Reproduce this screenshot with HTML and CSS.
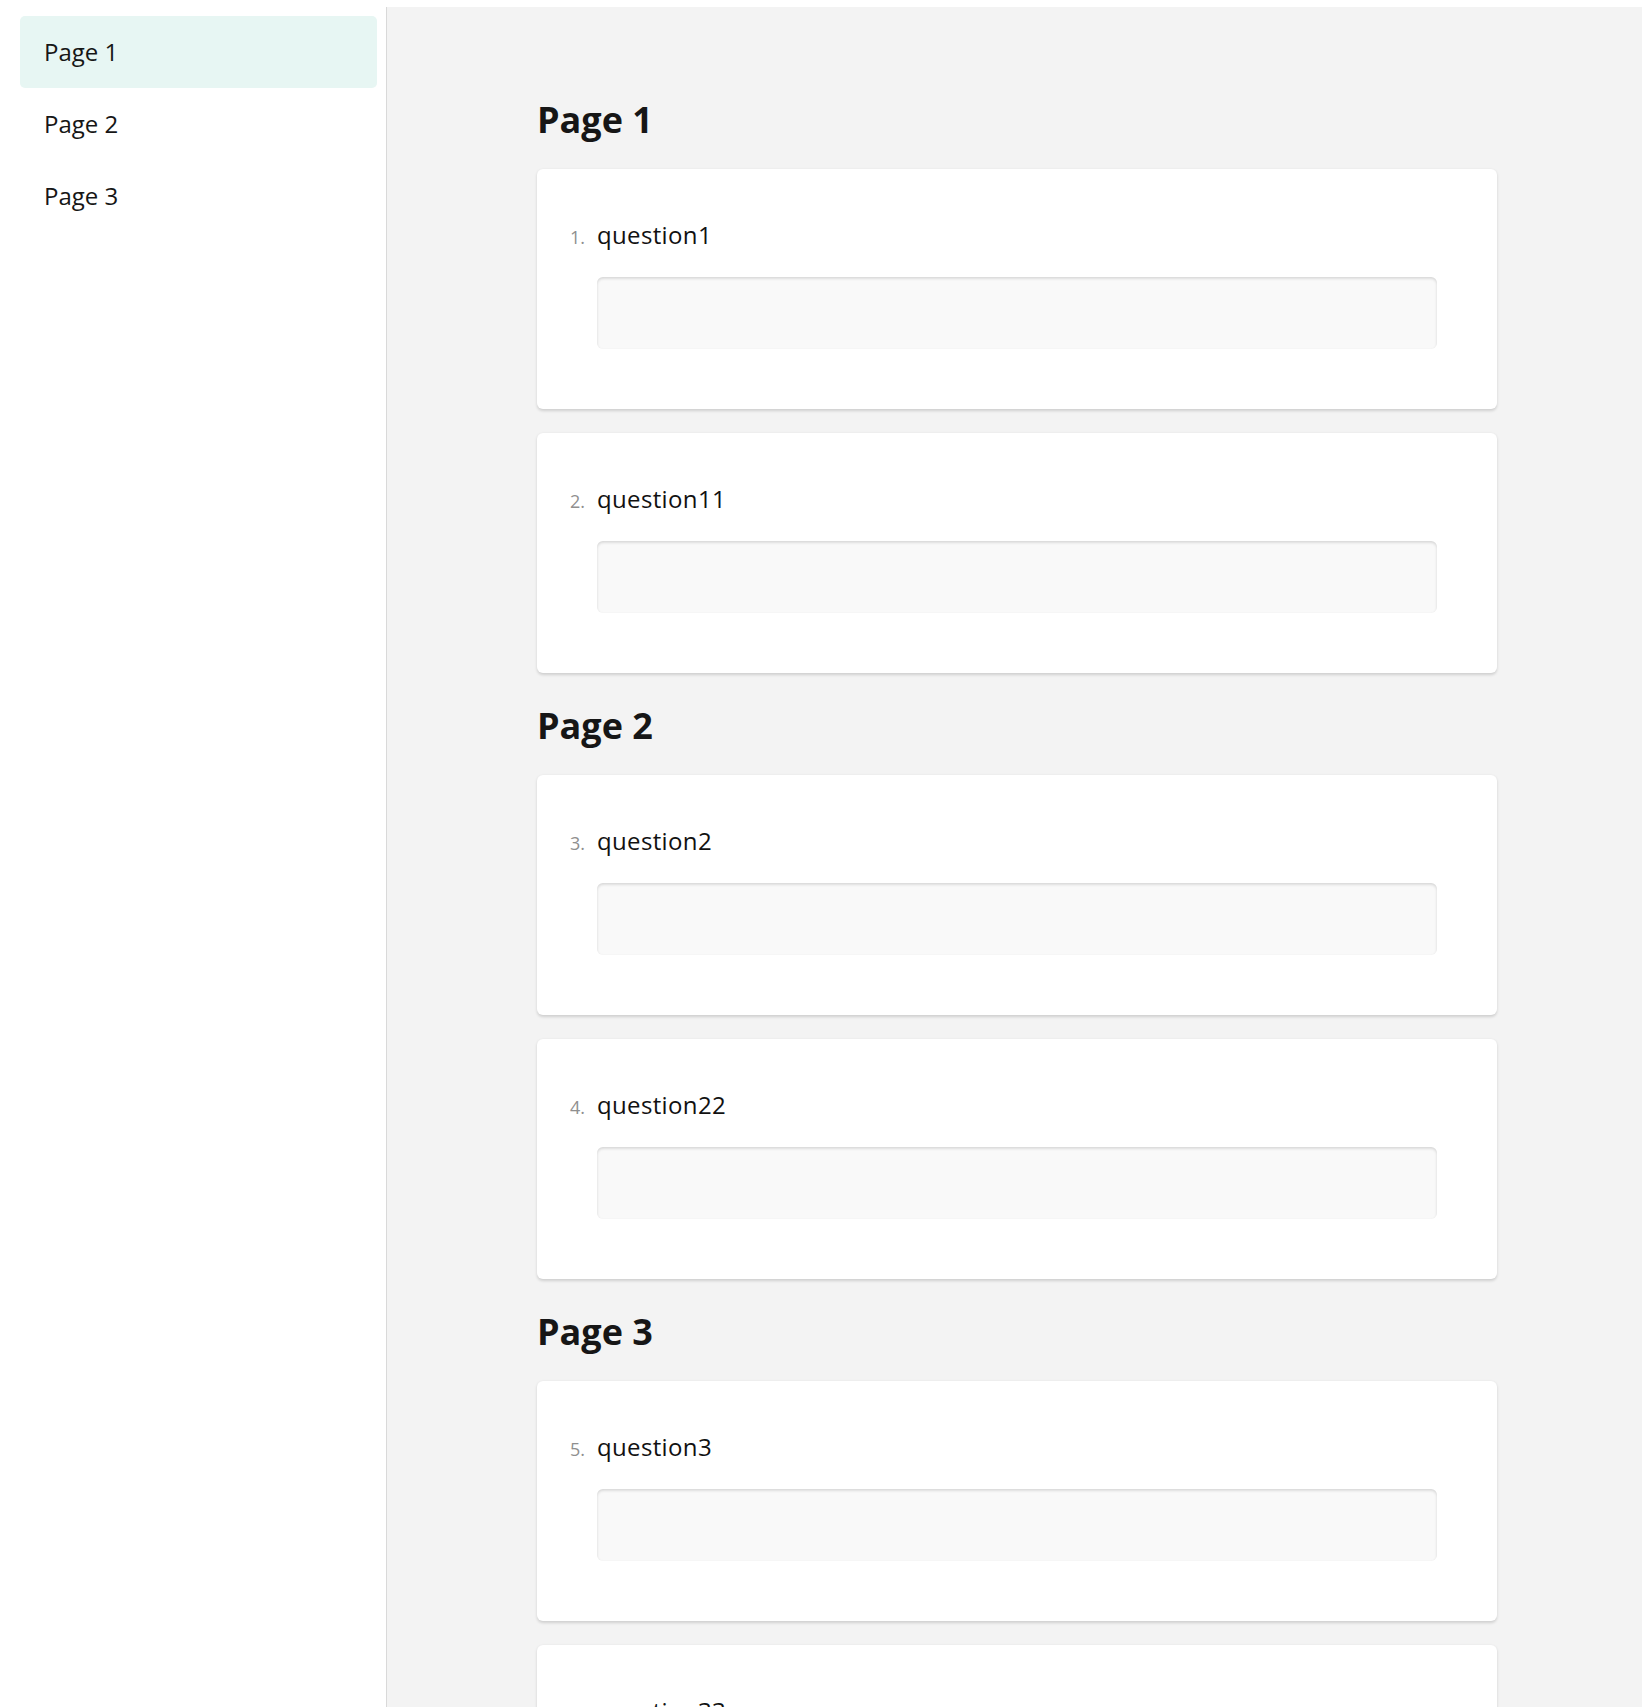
FILE: index.html
```html
<!DOCTYPE html>
<html lang="en">
<head>
<meta charset="utf-8">
<title>Survey</title>
<link rel="stylesheet" href="styles.css">
</head>
<body>
<div class="app">
  <nav class="toc">
    <div class="toc-item active">Page 1</div>
    <div class="toc-item">Page 2</div>
    <div class="toc-item">Page 3</div>
  </nav>
  <main class="main">
    <div class="survey">
      <section class="page">
        <h2 class="page-title">Page 1</h2>
        <div class="card">
          <div class="q-title"><span class="q-num">1.</span><span class="q-text">question1</span></div>
          <div class="q-input"></div>
        </div>
        <div class="card">
          <div class="q-title"><span class="q-num">2.</span><span class="q-text">question11</span></div>
          <div class="q-input"></div>
        </div>
      </section>
      <section class="page">
        <h2 class="page-title">Page 2</h2>
        <div class="card">
          <div class="q-title"><span class="q-num">3.</span><span class="q-text">question2</span></div>
          <div class="q-input"></div>
        </div>
        <div class="card">
          <div class="q-title"><span class="q-num">4.</span><span class="q-text">question22</span></div>
          <div class="q-input"></div>
        </div>
      </section>
      <section class="page">
        <h2 class="page-title">Page 3</h2>
        <div class="card">
          <div class="q-title"><span class="q-num">5.</span><span class="q-text">question3</span></div>
          <div class="q-input"></div>
        </div>
        <div class="card">
          <div class="q-title"><span class="q-num">6.</span><span class="q-text">question33</span></div>
          <div class="q-input"></div>
        </div>
      </section>
    </div>
  </main>
</div>
</body>
</html>
```

FILE: styles.css
```css
html, body {
  margin: 0;
  padding: 0;
  background: #ffffff;
  font-family: "Open Sans", "Noto Sans", sans-serif;
  color: #161616;
}

.app {
  display: flex;
  height: 100vh;
  overflow: hidden;
}

.toc {
  flex: 0 0 387px;
  width: 387px;
  margin-top: 7px;
  padding: 9px 9px 0 20px;
  box-sizing: border-box;
  border-right: 1px solid #d9d9d9;
  background: #ffffff;
  display: flex;
  flex-direction: column;
}

.toc-item {
  height: 72px;
  display: flex;
  align-items: center;
  padding-left: 24px;
  font-size: 24px;
  line-height: 36px;
  border-radius: 5px;
  color: #161616;
}

.toc-item.active {
  background: #e7f6f3;
}

.main {
  flex: 1 1 auto;
  margin-top: 7px;
  background: #f3f3f3;
  padding: 89px 0 0 150px;
  box-sizing: border-box;
}

.survey {
  width: 960px;
  display: flex;
  flex-direction: column;
  gap: 29px;
}

.page {
  display: flex;
  flex-direction: column;
  gap: 24px;
}

.page-title {
  margin: 0 0 1px 0;
  font-size: 36px;
  line-height: 48px;
  font-weight: 700;
  color: #161616;
}

.card {
  background: #ffffff;
  border-radius: 6px;
  box-shadow: 0 1.5px 3px rgba(0, 0, 0, 0.15);
  padding: 48px 60px 60px 60px;
  display: flex;
  flex-direction: column;
  gap: 24px;
}

.q-title {
  display: flex;
  align-items: baseline;
  height: 36px;
  margin-left: -60px;
  font-size: 24px;
  line-height: 36px;
}

.q-num {
  flex: 0 0 60px;
  box-sizing: border-box;
  padding-right: 12px;
  text-align: right;
  font-size: 18px;
  line-height: 24px;
  color: #8f8f8f;
}

.q-text {
  color: #111111;
  font-weight: 400;
  letter-spacing: 0.35px;
}

.q-input {
  height: 72px;
  border-radius: 6px;
  background: #f9f9f9;
  box-shadow: inset 0 1.5px 3px rgba(0, 0, 0, 0.15);
}
```
